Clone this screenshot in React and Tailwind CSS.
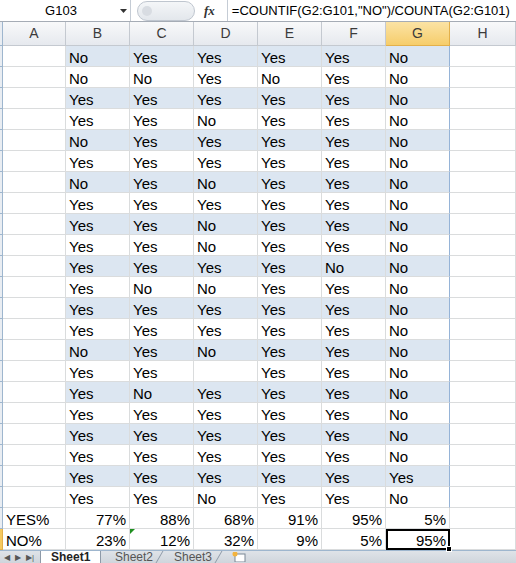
import React from 'react'

const rows = [
  ['No', 'Yes', 'Yes', 'Yes', 'Yes', 'No'],
  ['No', 'No', 'Yes', 'No', 'Yes', 'No'],
  ['Yes', 'Yes', 'Yes', 'Yes', 'Yes', 'No'],
  ['Yes', 'Yes', 'No', 'Yes', 'Yes', 'No'],
  ['No', 'Yes', 'Yes', 'Yes', 'Yes', 'No'],
  ['Yes', 'Yes', 'Yes', 'Yes', 'Yes', 'No'],
  ['No', 'Yes', 'No', 'Yes', 'Yes', 'No'],
  ['Yes', 'Yes', 'Yes', 'Yes', 'Yes', 'No'],
  ['Yes', 'Yes', 'No', 'Yes', 'Yes', 'No'],
  ['Yes', 'Yes', 'No', 'Yes', 'Yes', 'No'],
  ['Yes', 'Yes', 'Yes', 'Yes', 'No', 'No'],
  ['Yes', 'No', 'No', 'Yes', 'Yes', 'No'],
  ['Yes', 'Yes', 'Yes', 'Yes', 'Yes', 'No'],
  ['Yes', 'Yes', 'Yes', 'Yes', 'Yes', 'No'],
  ['No', 'Yes', 'No', 'Yes', 'Yes', 'No'],
  ['Yes', 'Yes', '', 'Yes', 'Yes', 'No'],
  ['Yes', 'No', 'Yes', 'Yes', 'Yes', 'No'],
  ['Yes', 'Yes', 'Yes', 'Yes', 'Yes', 'No'],
  ['Yes', 'Yes', 'Yes', 'Yes', 'Yes', 'No'],
  ['Yes', 'Yes', 'Yes', 'Yes', 'Yes', 'No'],
  ['Yes', 'Yes', 'Yes', 'Yes', 'Yes', 'Yes'],
  ['Yes', 'Yes', 'No', 'Yes', 'Yes', 'No'],
]

const yesPct = ['77%', '88%', '68%', '91%', '95%', '5%']
const noPct = ['23%', '12%', '32%', '9%', '5%', '95%']

const cols = ['A', 'B', 'C', 'D', 'E', 'F', 'G', 'H']
const gridCols = 'grid grid-cols-[3px_63px_64px_64px_64px_64px_64px_64px_1fr]'

function Cell({ children, className = '' }) {
  return (
    <div className={`h-[21px] border-r border-b border-[#dadcdd] px-[3px] leading-[21px] pt-[1px] whitespace-nowrap overflow-hidden ${className}`}>
      {children}
    </div>
  )
}

export default function App() {
  return (
    <div className="w-[516px] h-[563px] overflow-hidden bg-white text-[#111] flex flex-col" style={{ fontFamily: '"Liberation Sans", Arial, sans-serif' }}>
      {/* formula bar */}
      <div className="h-[22px] flex items-center border-b border-[#a5acb5] bg-white text-[13px] text-black">
        <div className="w-[131px] h-full flex items-center border-r border-[#c5ccd5]">
          <span className="flex-1 text-center pl-[6px]">G103</span>
          <span className="w-[14px] flex justify-center">
            <svg width="7" height="4" viewBox="0 0 7 4"><path d="M0 0h7L3.5 4z" fill="#333" /></svg>
          </span>
        </div>
        <div className="ml-[6px] w-[58px] h-[20px] rounded-full border border-[#bfc6cf] bg-gradient-to-b from-[#f4f6f8] to-[#e3e7ec] flex items-center pl-[4px]">
          <div className="w-[10px] h-[10px] rounded-full bg-[#d8dce2]" />
        </div>
        <span className="ml-[9px] italic font-bold text-[13px] text-[#333]" style={{ fontFamily: '"Liberation Serif", serif' }}>fx</span>
        <div className="ml-[12px] h-full border-l border-[#c5ccd5] pl-[4px] flex items-center">
          =COUNTIF(G2:G101,"NO")/COUNTA(G2:G101)
        </div>
      </div>

      {/* header row */}
      <div className={`${gridCols} h-[24px] text-[14px] text-[#3b3b3b]`}>
        <div className="bg-[#e9edf2] border-r border-b border-[#9eb6ce]" />
        {cols.map((c) => (
          <div
            key={c}
            className={
              c === 'G'
                ? 'flex items-center justify-center bg-gradient-to-b from-[#fbe3a4] to-[#f6cd6a] border-r border-b border-[#e3b04a]'
                : 'flex items-center justify-center bg-gradient-to-b from-[#f8f9fa] to-[#e6e9ee] border-r border-b border-[#c4c9d0]'
            }
          >
            {c}
          </div>
        ))}
      </div>

      {/* data rows */}
      <div className="text-[15px] text-black">
        {rows.map((r, i) => (
          <div key={i} className={gridCols}>
            <div className="h-[21px] bg-[#e9edf2] border-r border-b border-[#9eb6ce]" />
            <Cell />
            {r.map((v, j) => (
              <Cell
                key={j}
                className={`${i % 2 === 0 ? 'bg-[#dce6f1]' : 'bg-white'} ${j === 5 ? 'border-r-[#95b3d7]' : ''}`}
              >
                {v}
              </Cell>
            ))}
            <Cell />
          </div>
        ))}

        <div className={gridCols}>
          <div className="h-[21px] bg-[#e9edf2] border-r border-b border-[#9eb6ce]" />
          <Cell>YES%</Cell>
          {yesPct.map((v, j) => (
            <Cell key={j} className="text-right">{v}</Cell>
          ))}
          <Cell />
        </div>

        <div className={gridCols}>
          <div className="h-[21px] bg-[#f6c95f] border-r border-b border-[#e3b04a]" />
          <Cell>NO%</Cell>
          {noPct.map((v, j) => (
            <div key={j} className="relative">
              {j === 1 && (
                <div className="absolute left-0 top-0 w-0 h-0 border-t-[5px] border-r-[5px] border-t-[#1f8f1f] border-r-transparent z-10" />
              )}
              {j === 5 ? (
                <div className="relative h-[21px] border-2 border-black px-[2px] leading-[19px] text-right">
                  {v}
                  <div className="absolute -right-[4px] -bottom-[4px] w-[6px] h-[6px] bg-black border border-white" />
                </div>
              ) : (
                <Cell className="text-right">{v}</Cell>
              )}
            </div>
          ))}
          <Cell />
        </div>
      </div>

      {/* sheet tabs */}
      <div className="flex-1 flex items-start bg-gradient-to-b from-[#dfe3e8] to-[#cfd5dc] border-t border-[#9eb6ce] text-[12px] leading-[11px] overflow-hidden">
        <div className="flex items-center gap-[5px] pl-[4px] pt-[1px] text-[#555] text-[8px] w-[40px]">
          <span>◀</span>
          <span>▶</span>
          <span>▶|</span>
        </div>
        <div className="h-[12px] px-[10px] bg-white border-x border-[#8e9aa8] font-bold text-[#222] leading-[12px]">Sheet1</div>
        <div className="h-[12px] pl-[14px] pr-[6px] text-[#555] leading-[12px] border-r border-[#8e9aa8] -skew-x-[30deg]">
          <span className="inline-block skew-x-[30deg]">Sheet2</span>
        </div>
        <div className="h-[12px] pl-[14px] pr-[6px] text-[#555] leading-[12px] border-r border-[#8e9aa8] -skew-x-[30deg]">
          <span className="inline-block skew-x-[30deg]">Sheet3</span>
        </div>
        <div className="h-[12px] pl-[12px] pr-[6px] flex items-start pt-[1px]">
          <svg width="16" height="10" viewBox="0 0 16 10">
            <rect x="4" y="2" width="10" height="8" fill="#fff" stroke="#7a8796" />
            <circle cx="4" cy="2" r="2.5" fill="#f3b33d" />
          </svg>
        </div>
      </div>
    </div>
  )
}
